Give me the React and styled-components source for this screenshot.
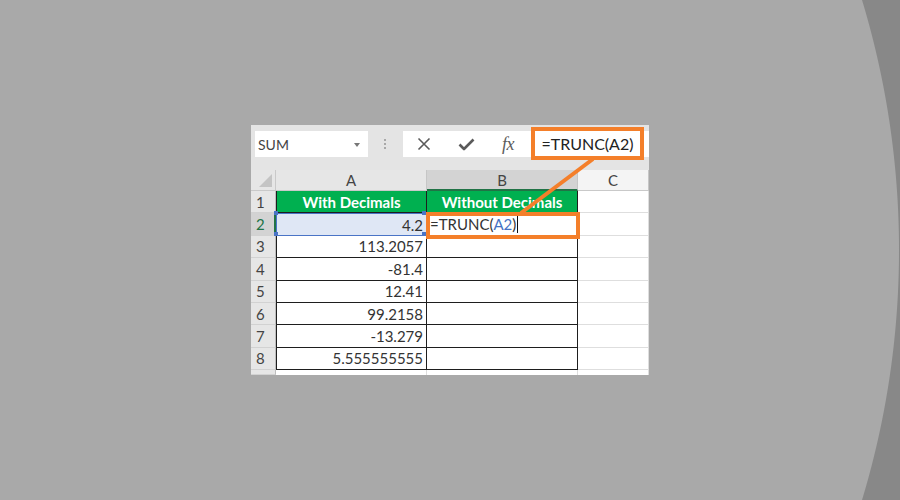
import React from "react";
import styled, { createGlobalStyle } from "styled-components";

const Global = createGlobalStyle`
  html, body { margin: 0; padding: 0; }
  body { font-family: "Lato", "Liberation Sans", sans-serif; }
`;

const ORANGE = "#f47f2a";
const LINE = "#1e1e1e";

const Stage = styled.div`
  width: 900px;
  height: 500px;
  display: flex;
  align-items: center;
  justify-content: center;
  background: radial-gradient(circle at 36px 250px, #a9a9a9 862.5px, #888888 863.5px);
  overflow: hidden;
`;

const Shot = styled.div`
  position: relative;
  width: 398px;
  height: 250px;
  background: #e4e4e4;
  display: flex;
  flex-direction: column;
  overflow: hidden;
`;

const FormulaBar = styled.div`
  display: flex;
  align-items: center;
  height: 26px;
  margin-top: 6px;
  padding-left: 4px;
`;

const NameBox = styled.div`
  position: relative;
  width: 113px;
  height: 26px;
  background: #fff;
  display: flex;
  align-items: center;
  padding-left: 3px;
  box-sizing: border-box;
  font-size: 14px;
  color: #444;
  &::after {
    content: "";
    position: absolute;
    right: 8px;
    top: 12px;
    border-left: 3.5px solid transparent;
    border-right: 3.5px solid transparent;
    border-top: 4px solid #777;
  }
`;

const Grip = styled.div`
  width: 35px;
  display: flex;
  flex-direction: column;
  align-items: center;
  gap: 2px;
  padding-right: 2px;
  box-sizing: border-box;
  span {
    width: 2px;
    height: 2px;
    background: #a8a8a8;
  }
`;

const FxArea = styled.div`
  flex: 1;
  height: 26px;
  background: #fff;
  display: flex;
  align-items: center;
`;

const IconSlot = styled.div`
  width: 42px;
  display: flex;
  justify-content: center;
  align-items: center;
  color: #5a5a5a;
`;

const FxText = styled.span`
  font-family: "Liberation Serif", "DejaVu Serif", serif;
  font-style: italic;
  font-size: 18px;
  color: #5c5c5c;
  letter-spacing: -0.5px;
`;

const Sheet = styled.div`
  margin-top: 13px;
  display: grid;
  grid-template-columns: 25px 151px 151px 1fr;
  grid-template-rows: 21px repeat(8, 22.375px) 1fr;
  flex: 1;
  background: #fff;
`;

const Corner = styled.div`
  position: relative;
  background: #e6e6e6;
  border-right: 1px solid #c9c9c9;
  border-bottom: 1px solid #c9c9c9;
  box-sizing: border-box;
  &::after {
    content: "";
    position: absolute;
    right: 3px;
    bottom: 3px;
    border-left: 13px solid transparent;
    border-bottom: 13px solid #c4c4c4;
  }
`;

const ColHead = styled.div`
  display: flex;
  align-items: center;
  justify-content: center;
  font-size: 15px;
  color: #444;
  box-sizing: border-box;
  background: ${(p) => (p.$active ? "#d3d3d3" : p.$light ? "#f4f4f4" : "#e6e6e6")};
  border-right: 1px solid #c6c6c6;
  border-bottom: ${(p) => (p.$active ? "2px solid #217346" : "1px solid #c9c9c9")};
`;

const RowHead = styled.div`
  display: flex;
  align-items: center;
  padding-left: 5px;
  font-size: 15px;
  color: ${(p) => (p.$active ? "#217346" : "#444")};
  box-sizing: border-box;
  background: ${(p) => (p.$active ? "#d3d3d3" : "#e6e6e6")};
  border-bottom: 1px solid #d2d2d2;
  border-right: ${(p) => (p.$active ? "2px solid #217346" : "1px solid #bdbdbd")};
`;

const Cell = styled.div`
  position: relative;
  display: flex;
  align-items: center;
  justify-content: ${(p) => (p.$align === "right" ? "flex-end" : p.$align === "center" ? "center" : "flex-start")};
  padding: 0 3px;
  box-sizing: border-box;
  font-size: 15px;
  color: #333;
  white-space: nowrap;
  background: ${(p) => (p.$green ? "#00b050" : "#fff")};
  border-right: 1px solid ${LINE};
  border-bottom: ${(p) => (p.$open ? "none" : `1px solid ${LINE}`)};
  border-left: ${(p) => (p.$first ? `1px solid ${LINE}` : "none")};
`;

const HeadText = styled.span`
  color: #fff;
  font-weight: 700;
  font-size: 15px;
`;

const RangeCell = styled(Cell)`
  background: #dfe7f5;
  border: 1.5px solid #4a74c6;
  &::before {
    content: "";
    position: absolute;
    left: -3px;
    top: -3px;
    width: 4px;
    height: 4px;
    background: #4a74c6;
    box-shadow: 148px 0 #4a74c6, 0 21px #4a74c6, 148px 21px #4a74c6;
  }
`;

const PlainCell = styled.div`
  box-sizing: border-box;
  background: #fff;
  border-bottom: ${(p) => (p.$open ? "none" : "1px solid #dedede")};
  border-right: 1px solid #dedede;
`;

const RefText = styled.span`
  color: #4472c4;
`;

const Caret = styled.span`
  display: inline-block;
  width: 1px;
  height: 17px;
  background: #111;
  margin-left: 1px;
`;

const Callout = styled.div`
  position: absolute;
  box-sizing: border-box;
  border: 4px solid ${ORANGE};
  display: flex;
  align-items: center;
  justify-content: center;
`;

const FormulaCallout = styled(Callout)`
  left: 280px;
  top: 2px;
  width: 113px;
  height: 33px;
  background: #fff;
  font-size: 16px;
  color: #222;
`;

const CellCallout = styled(Callout)`
  left: 175px;
  top: 87px;
  width: 154px;
  height: 27px;
`;

const Connector = styled.svg`
  position: absolute;
  left: 0;
  top: 0;
  pointer-events: none;
`;

const values = ["4.2", "113.2057", "-81.4", "12.41", "99.2158", "-13.279", "5.555555555"];

export default function App() {
  return (
    <>
      <Global />
      <Stage>
        <Shot>
          <FormulaBar>
            <NameBox>SUM</NameBox>
            <Grip>
              <span />
              <span />
              <span />
            </Grip>
            <FxArea>
              <IconSlot>
                <svg width="14" height="14" viewBox="0 0 14 14">
                  <path d="M1.5 1.5 L12.5 12.5 M12.5 1.5 L1.5 12.5" stroke="#5a5a5a" strokeWidth="1.6" fill="none" />
                </svg>
              </IconSlot>
              <IconSlot>
                <svg width="17" height="13" viewBox="0 0 17 13">
                  <path d="M1.5 6.5 L6 11 L15.5 1.5" stroke="#5a5a5a" strokeWidth="2.6" fill="none" strokeLinejoin="round" />
                </svg>
              </IconSlot>
              <IconSlot>
                <FxText>fx</FxText>
              </IconSlot>
            </FxArea>
          </FormulaBar>
          <Sheet>
            <Corner />
            <ColHead>A</ColHead>
            <ColHead $active>B</ColHead>
            <ColHead $light>C</ColHead>

            <RowHead>1</RowHead>
            <Cell $green $first $align="center">
              <HeadText>With Decimals</HeadText>
            </Cell>
            <Cell $green $align="center">
              <HeadText>Without Decimals</HeadText>
            </Cell>
            <PlainCell />

            {values.map((v, i) => {
              const row = i + 2;
              return (
                <React.Fragment key={row}>
                  <RowHead $active={row === 2}>{row}</RowHead>
                  {row === 2 ? (
                    <RangeCell $first $align="right">{v}</RangeCell>
                  ) : (
                    <Cell $first $align="right">{v}</Cell>
                  )}
                  <Cell>
                    {row === 2 && (
                      <>
                        =TRUNC(<RefText>A2</RefText>)<Caret />
                      </>
                    )}
                  </Cell>
                  <PlainCell />
                </React.Fragment>
              );
            })}

            <RowHead />
            <PlainCell $open />
            <PlainCell $open />
            <PlainCell $open />
          </Sheet>

          <Connector width="398" height="250">
            <line x1="342" y1="34" x2="270" y2="88" stroke={ORANGE} strokeWidth="4" />
          </Connector>
          <FormulaCallout>=TRUNC(A2)</FormulaCallout>
          <CellCallout />
        </Shot>
      </Stage>
    </>
  );
}
